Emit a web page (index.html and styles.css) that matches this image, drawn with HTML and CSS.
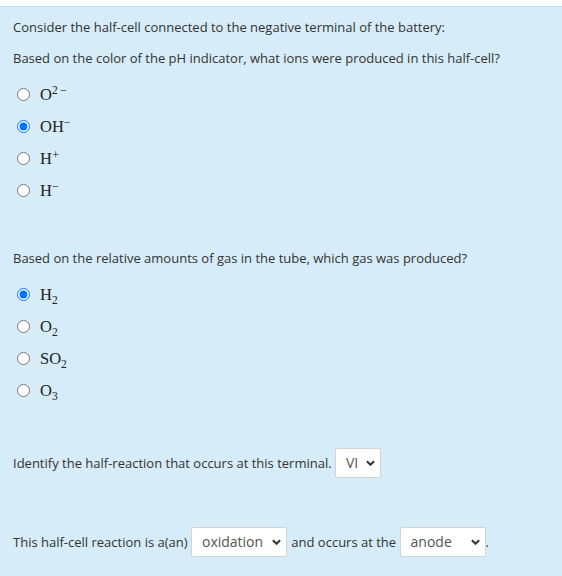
FILE: index.html
```html
<!DOCTYPE html>
<html>
<head>
<meta charset="utf-8">
<link rel="stylesheet" href="styles.css">
</head>
<body>
<div class="panel">
  <p class="q first">Consider the half-cell connected to the negative terminal of the battery:</p>
  <p class="q second">Based on the color of the pH indicator, what ions were produced in this half-cell?</p>
  <div class="options">
    <label class="opt"><input type="radio" name="ion"><span class="chem">O<sup>2&thinsp;−</sup></span></label>
    <label class="opt"><input type="radio" name="ion" checked><span class="chem">OH<sup>−</sup></span></label>
    <label class="opt"><input type="radio" name="ion"><span class="chem">H<sup class="plus">+</sup></span></label>
    <label class="opt"><input type="radio" name="ion"><span class="chem">H<sup>−</sup></span></label>
  </div>
  <p class="q gap">Based on the relative amounts of gas in the tube, which gas was produced?</p>
  <div class="options">
    <label class="opt"><input type="radio" name="gas" checked><span class="chem">H<sub>2</sub></span></label>
    <label class="opt"><input type="radio" name="gas"><span class="chem">O<sub>2</sub></span></label>
    <label class="opt"><input type="radio" name="gas"><span class="chem">SO<sub>2</sub></span></label>
    <label class="opt"><input type="radio" name="gas"><span class="chem">O<sub>3</sub></span></label>
  </div>
  <p class="q line gap2">Identify the half-reaction that occurs at this terminal. <span class="sel sel-vi">VI<svg class="chev" viewBox="0 0 10 6"><path d="M1 1 L5 5 L9 1" fill="none" stroke="#333" stroke-width="2.2"/></svg></span></p>
  <p class="q line gap3">This half-cell reaction is a(an) <span class="sel sel-ox">oxidation<svg class="chev" viewBox="0 0 10 6"><path d="M1 1 L5 5 L9 1" fill="none" stroke="#333" stroke-width="2.2"/></svg></span> and occurs at the <span class="sel sel-an">anode<svg class="chev" viewBox="0 0 10 6"><path d="M1 1 L5 5 L9 1" fill="none" stroke="#333" stroke-width="2.2"/></svg></span>.</p>
</div>
</body>
</html>
```
FILE: styles.css
```css
html, body {
  margin: 0;
  padding: 0;
  background: #ffffff;
}
.panel {
  margin-top: 6px;
  height: 570px;
  background: #d6ecf8;
  border-top: 1px solid #b3e3f4;
  padding: 0 13px;
  font-family: "Open Sans", sans-serif;
  font-size: 13px;
  color: #333333;
  box-sizing: border-box;
}
.q {
  margin: 0;
  line-height: 18px;
}
.q.first {
  padding-top: 11px;
}
.q.second {
  margin-top: 13px;
}
.options {
  display: flex;
  flex-direction: column;
  gap: 13px;
  margin-top: 18px;
}
.opt {
  display: flex;
  align-items: center;
  height: 19px;
}
.opt input {
  margin: 0 10px 0 4px;
  width: 13px;
  height: 13px;
}
.chem {
  font-family: "Liberation Serif", "Times New Roman", serif;
  font-size: 16.5px;
  color: #222;
  line-height: 19px;
}
.chem sup {
  font-size: 11.5px;
  vertical-align: 6px;
  line-height: 0;
}
.chem sup.plus {
  font-size: 13px;
  vertical-align: 5px;
}
.chem sub {
  font-size: 11.5px;
  vertical-align: -4px;
  line-height: 0;
}
.q.gap {
  margin-top: 49px;
}
.q.gap2 {
  margin-top: 48px;
}
.q.gap3 {
  margin-top: 49px;
}
.line {
  display: flex;
  align-items: center;
  white-space: pre;
}
.sel {
  display: inline-flex;
  align-items: center;
  justify-content: space-between;
  box-sizing: border-box;
  height: 30px;
  background: #fff;
  border: 1px solid #cfd4d8;
  border-radius: 2px;
  padding: 0 5px 0 10px;
  font-size: 14px;
  color: #555;
  margin: 0 1px 0 0;
}
.sel-vi { width: 46px; }
.sel-ox { width: 96px; }
.sel-an { width: 86px; margin-right: 0; }
.chev {
  width: 9px;
  height: 6px;
}
```
